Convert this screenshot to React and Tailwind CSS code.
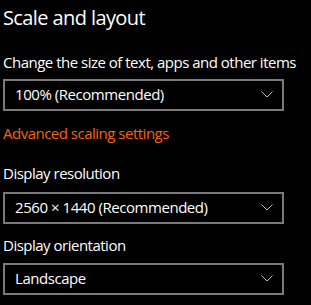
const Select = ({ value, className = '' }) => (
  <div
    className={`flex h-[32px] w-[281px] items-center justify-between border-2 border-[#7a7a7a] pl-[10px] pr-[9px] ${className}`}
  >
    <span className="pb-[2px] text-[15px] leading-[20px] tracking-[-0.45px] text-white">{value}</span>
    <svg width="12" height="7" viewBox="0 0 12 7" fill="none" className="mb-[1px]">
      <path d="M0.5 0.5 L6 6 L11.5 0.5" stroke="#bdbdbd" strokeWidth="1" />
    </svg>
  </div>
)

export default function App() {
  return (
    <div
      className="flex h-[305px] w-[311px] flex-col bg-black pl-[3px] text-white"
      style={{ fontFamily: '"Open Sans", "Noto Sans", sans-serif' }}
    >
      <h1 className="pt-[4px] text-[20px] leading-[28px] font-normal tracking-[-0.6px]">Scale and layout</h1>
      <p className="mt-[20px] whitespace-nowrap text-[15px] leading-[20px] tracking-[-0.5px]">
        Change the size of text, apps and other items
      </p>
      <Select value="100% (Recommended)" className="mt-[7px]" />
      <a className="mt-[12px] text-[15px] leading-[20px] tracking-[-0.5px] text-[#f7630c]">Advanced scaling settings</a>
      <p className="mt-[20px] text-[15px] leading-[20px] tracking-[-0.5px]">Display resolution</p>
      <Select value="2560 × 1440 (Recommended)" className="mt-[9px]" />
      <p className="mt-[11px] text-[15px] leading-[20px] tracking-[-0.5px]">Display orientation</p>
      <Select value="Landscape" className="mt-[8px]" />
    </div>
  )
}
